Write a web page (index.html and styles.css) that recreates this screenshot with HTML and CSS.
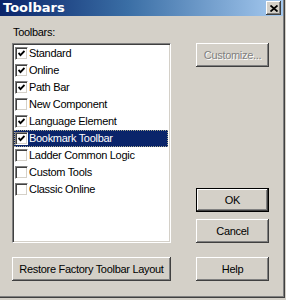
FILE: index.html
```html
<!DOCTYPE html>
<html>
<head>
<meta charset="utf-8">
<link rel="stylesheet" href="styles.css">
</head>
<body>
<div class="dialog">
  <div class="titlebar">
    <span class="title">Toolbars</span>
    <span class="close"><svg width="8" height="7" viewBox="0 0 8 7"><path d="M0.5 0.5 L7.5 6.5 M7.5 0.5 L0.5 6.5" stroke="#000" stroke-width="1.8" fill="none"/></svg></span>
  </div>
  <div class="content">
    <div class="label">Toolbars:</div>
    <div class="spacer"></div>
    <div class="list">
      <div class="row"><span class="cb on"><svg width="7" height="7" viewBox="0 0 7 7"><path d="M0.5 3 L2.5 5.2 L6.5 1" stroke="#000" stroke-width="1.9" fill="none"/></svg></span><span class="txt">Standard</span></div>
      <div class="row"><span class="cb on"><svg width="7" height="7" viewBox="0 0 7 7"><path d="M0.5 3 L2.5 5.2 L6.5 1" stroke="#000" stroke-width="1.9" fill="none"/></svg></span><span class="txt">Online</span></div>
      <div class="row"><span class="cb on"><svg width="7" height="7" viewBox="0 0 7 7"><path d="M0.5 3 L2.5 5.2 L6.5 1" stroke="#000" stroke-width="1.9" fill="none"/></svg></span><span class="txt">Path Bar</span></div>
      <div class="row"><span class="cb"></span><span class="txt">New Component</span></div>
      <div class="row"><span class="cb on"><svg width="7" height="7" viewBox="0 0 7 7"><path d="M0.5 3 L2.5 5.2 L6.5 1" stroke="#000" stroke-width="1.9" fill="none"/></svg></span><span class="txt">Language Element</span></div>
      <div class="row selected"><span class="cb on"><svg width="7" height="7" viewBox="0 0 7 7"><path d="M0.5 3 L2.5 5.2 L6.5 1" stroke="#000" stroke-width="1.9" fill="none"/></svg></span><span class="txt">Bookmark Toolbar</span></div>
      <div class="row"><span class="cb"></span><span class="txt">Ladder Common Logic</span></div>
      <div class="row"><span class="cb"></span><span class="txt">Custom Tools</span></div>
      <div class="row"><span class="cb"></span><span class="txt">Classic Online</span></div>
    </div>
    <div class="side">
      <div class="btn disabled">Customize...</div>
      <div class="group">
        <div class="btn default">OK</div>
        <div class="btn">Cancel</div>
      </div>
    </div>
    <div class="btn wide">Restore Factory Toolbar Layout</div>
    <div class="btn help">Help</div>
  </div>
</div>
</body>
</html>
```
FILE: styles.css
```css
html, body {
  margin: 0;
  padding: 0;
  background: #d4d0c8;
}
body {
  font-family: "Liberation Sans", Arial, sans-serif;
  font-size: 11px;
  letter-spacing: -0.3px;
  color: #000;
}
.dialog {
  width: 285px;
  height: 298px;
  box-sizing: border-box;
  border-right: 1px solid #404040;
  border-bottom: 1px solid #404040;
  box-shadow: inset -1px -1px #808080;
  background: #d4d0c8;
}
.titlebar {
  height: 16px;
  display: flex;
  align-items: center;
  justify-content: space-between;
  padding: 0 2px 0 3px;
  margin-right: 1px;
  background: linear-gradient(to right, #0a246a, #3a6ea5 45%, #a6caf0);
}
.title {
  font-family: "DejaVu Sans", sans-serif;
  font-weight: bold;
  font-size: 13px;
  letter-spacing: 0;
  color: #fff;
  line-height: 16px;
}
.close {
  width: 15px;
  height: 14px;
  box-sizing: border-box;
  display: flex;
  align-items: center;
  justify-content: center;
  background: #d4d0c8;
  box-shadow: inset -1px -1px #404040, inset 1px 1px #fff, inset -2px -2px #808080;
}
.content {
  display: grid;
  grid-template-columns: 159px 73px;
  grid-template-rows: 27px 200px 24px;
  column-gap: 25px;
  padding-left: 12px;
}
.label {
  align-self: end;
  margin-bottom: 4px;
  padding-left: 1px;
  line-height: 13px;
}
.list {
  box-sizing: border-box;
  background: #fff;
  border: 1px solid;
  border-color: #808080 #fff #fff #808080;
  box-shadow: inset 1px 1px #404040, inset -1px -1px #d4d0c8;
  padding: 1px 2px 0 1px;
}
.row {
  height: 17px;
  display: flex;
  align-items: center;
  gap: 1px;
  padding-left: 1px;
}
.row.selected {
  background: #0a246a;
  color: #fff;
  outline: 1px dotted #a8a890;
  outline-offset: -1px;
}
.cb {
  width: 13px;
  height: 13px;
  flex: none;
  box-sizing: border-box;
  border: 1px solid;
  border-color: #808080 #fff #fff #808080;
  box-shadow: inset 1px 1px #404040, inset -1px -1px #d4d0c8;
  background: #fff;
  display: flex;
  align-items: center;
  justify-content: center;
}
.txt {
  line-height: 17px;
  white-space: nowrap;
}
.side {
  display: flex;
  flex-direction: column;
  justify-content: space-between;
}
.group {
  display: flex;
  flex-direction: column;
  gap: 7px;
}
.btn {
  height: 24px;
  box-sizing: border-box;
  display: flex;
  align-items: center;
  justify-content: center;
  white-space: nowrap;
  background: #d4d0c8;
  box-shadow: inset -1px -1px #404040, inset 1px 1px #fff, inset -2px -2px #808080, inset 2px 2px #d4d0c8;
}
.btn.default {
  border: 1px solid #000;
  box-shadow: inset -1px -1px #404040, inset 1px 1px #fff, inset -2px -2px #808080;
}
.btn.disabled {
  color: #808080;
  text-shadow: 1px 1px #fff;
}
.btn.wide,
.btn.help {
  margin-top: 14px;
}
```
